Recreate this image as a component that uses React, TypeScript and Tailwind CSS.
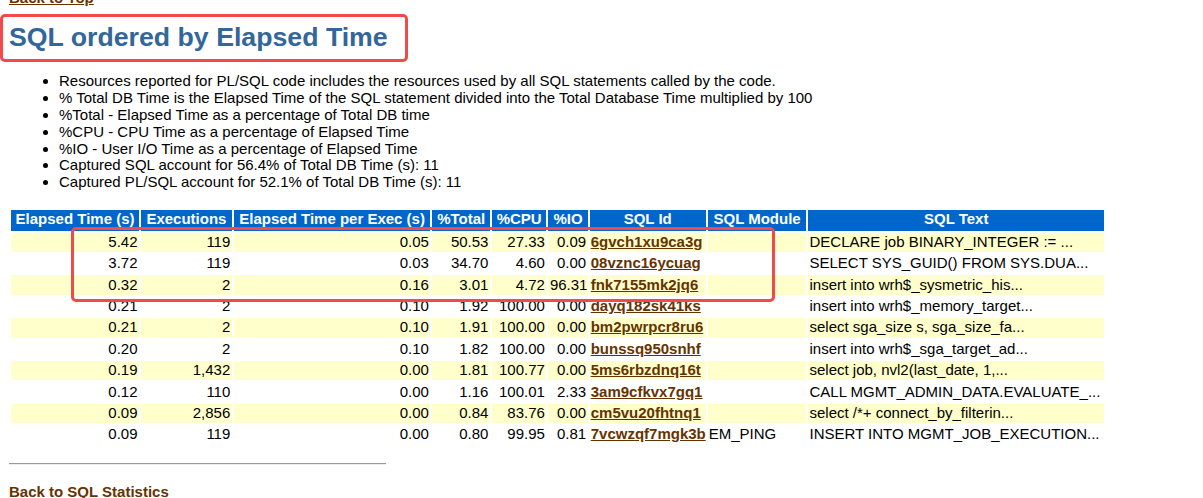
import React from "react";

type Row = {
  el: string;
  ex: string;
  per: string;
  tot: string;
  cpu: string;
  io: string;
  id: string;
  mod: string;
  text: string;
};

const rows: Row[] = [
  { el: "5.42", ex: "119", per: "0.05", tot: "50.53", cpu: "27.33", io: "0.09", id: "6gvch1xu9ca3g", mod: "", text: "DECLARE job BINARY_INTEGER := ..." },
  { el: "3.72", ex: "119", per: "0.03", tot: "34.70", cpu: "4.60", io: "0.00", id: "08vznc16ycuag", mod: "", text: "SELECT SYS_GUID() FROM SYS.DUA..." },
  { el: "0.32", ex: "2", per: "0.16", tot: "3.01", cpu: "4.72", io: "96.31", id: "fnk7155mk2jq6", mod: "", text: "insert into wrh$_sysmetric_his..." },
  { el: "0.21", ex: "2", per: "0.10", tot: "1.92", cpu: "100.00", io: "0.00", id: "dayq182sk41ks", mod: "", text: "insert into wrh$_memory_target..." },
  { el: "0.21", ex: "2", per: "0.10", tot: "1.91", cpu: "100.00", io: "0.00", id: "bm2pwrpcr8ru6", mod: "", text: "select sga_size s, sga_size_fa..." },
  { el: "0.20", ex: "2", per: "0.10", tot: "1.82", cpu: "100.00", io: "0.00", id: "bunssq950snhf", mod: "", text: "insert into wrh$_sga_target_ad..." },
  { el: "0.19", ex: "1,432", per: "0.00", tot: "1.81", cpu: "100.77", io: "0.00", id: "5ms6rbzdnq16t", mod: "", text: "select job, nvl2(last_date, 1,..." },
  { el: "0.12", ex: "110", per: "0.00", tot: "1.16", cpu: "100.01", io: "2.33", id: "3am9cfkvx7gq1", mod: "", text: "CALL MGMT_ADMIN_DATA.EVALUATE_..." },
  { el: "0.09", ex: "2,856", per: "0.00", tot: "0.84", cpu: "83.76", io: "0.00", id: "cm5vu20fhtnq1", mod: "", text: "select /*+ connect_by_filterin..." },
  { el: "0.09", ex: "119", per: "0.00", tot: "0.80", cpu: "99.95", io: "0.81", id: "7vcwzqf7mgk3b", mod: "EM_PING", text: "INSERT INTO MGMT_JOB_EXECUTION..." },
];

const bullets = [
  "Resources reported for PL/SQL code includes the resources used by all SQL statements called by the code.",
  "% Total DB Time is the Elapsed Time of the SQL statement divided into the Total Database Time multiplied by 100",
  "%Total - Elapsed Time as a percentage of Total DB time",
  "%CPU - CPU Time as a percentage of Elapsed Time",
  "%IO - User I/O Time as a percentage of Elapsed Time",
  "Captured SQL account for 56.4% of Total DB Time (s): 11",
  "Captured PL/SQL account for 52.1% of Total DB Time (s): 11",
];

const th = "bg-[#0066CC] text-white font-bold text-center whitespace-nowrap overflow-visible px-0 pt-[1.1px] pb-[2.6px] leading-[16.86px]";

export default function App() {
  return (
    <div className="relative flow-root min-h-[498px] overflow-hidden bg-white pl-[9px] font-['Liberation_Sans',Arial,Helvetica,sans-serif] text-[15px] leading-[16.86px] text-black">
      <div className="-mt-[10.5px]">
        <a className="font-bold text-[#663300] underline">Back to Top</a>
      </div>
      <h2 className="mt-[15.5px] mb-[20.7px] text-[26.7px] font-bold leading-[30.33px] text-[#336699]">
        SQL ordered by Elapsed Time
      </h2>
      <ul className="mb-[17px] list-disc pl-[50px] leading-[16.9px]">
        {bullets.map((b) => (
          <li key={b}>{b}</li>
        ))}
      </ul>
      <table className="w-[1097px] table-fixed border-separate border-spacing-x-[2.9px] border-spacing-y-[2px]">
        <colgroup>
          <col className="w-[127px]" />
          <col className="w-[90px]" />
          <col className="w-[195px]" />
          <col className="w-[57px]" />
          <col className="w-[54px]" />
          <col className="w-[39px]" />
          <col className="w-[115px]" />
          <col className="w-[98px]" />
          <col className="w-[293px]" />
        </colgroup>
        <thead>
          <tr>
            <th className={th}>Elapsed Time (s)</th>
            <th className={th}>Executions</th>
            <th className={th}>Elapsed Time per Exec (s)</th>
            <th className={th}>%Total</th>
            <th className={th}>%CPU</th>
            <th className={th}>%IO</th>
            <th className={th}>SQL Id</th>
            <th className={th}>SQL Module</th>
            <th className={th}>SQL Text</th>
          </tr>
        </thead>
        <tbody>
          {rows.map((r, i) => {
            const bg = i % 2 === 0 ? "bg-[#FFFFCC]" : "bg-white";
            const num = `${bg} text-right whitespace-nowrap px-[1.5px] py-[1.25px] align-top`;
            const txt = `${bg} text-left whitespace-nowrap overflow-visible px-[1px] py-[1.25px] align-top`;
            return (
              <tr key={i}>
                <td className={num}>{r.el}</td>
                <td className={num}>{r.ex}</td>
                <td className={num}>{r.per}</td>
                <td className={num}>{r.tot}</td>
                <td className={num}>{r.cpu}</td>
                <td className={num}>{r.io}</td>
                <td className={txt}>
                  <a className="font-bold text-[#663300] underline">{r.id}</a>
                </td>
                <td className={txt}>{r.mod}</td>
                <td className={txt}>{r.text}</td>
              </tr>
            );
          })}
        </tbody>
      </table>
      <div className="mt-[17px] h-[2px] w-[377px] border-t border-b border-t-[#9a9a9a] border-b-[#eeeeee]" />
      <div className="mt-[19px]">
        <a className="font-bold text-[#663300] underline">Back to SQL Statistics</a>
      </div>

      <div className="pointer-events-none absolute left-[0px] top-[14px] h-[48px] w-[408px] rounded-[5px] border-[3px] border-[#f24a4a]" />
      <div className="pointer-events-none absolute left-[71px] top-[227px] h-[75px] w-[704px] rounded-[5px] border-[3px] border-[#f24a4a]" />
    </div>
  );
}
